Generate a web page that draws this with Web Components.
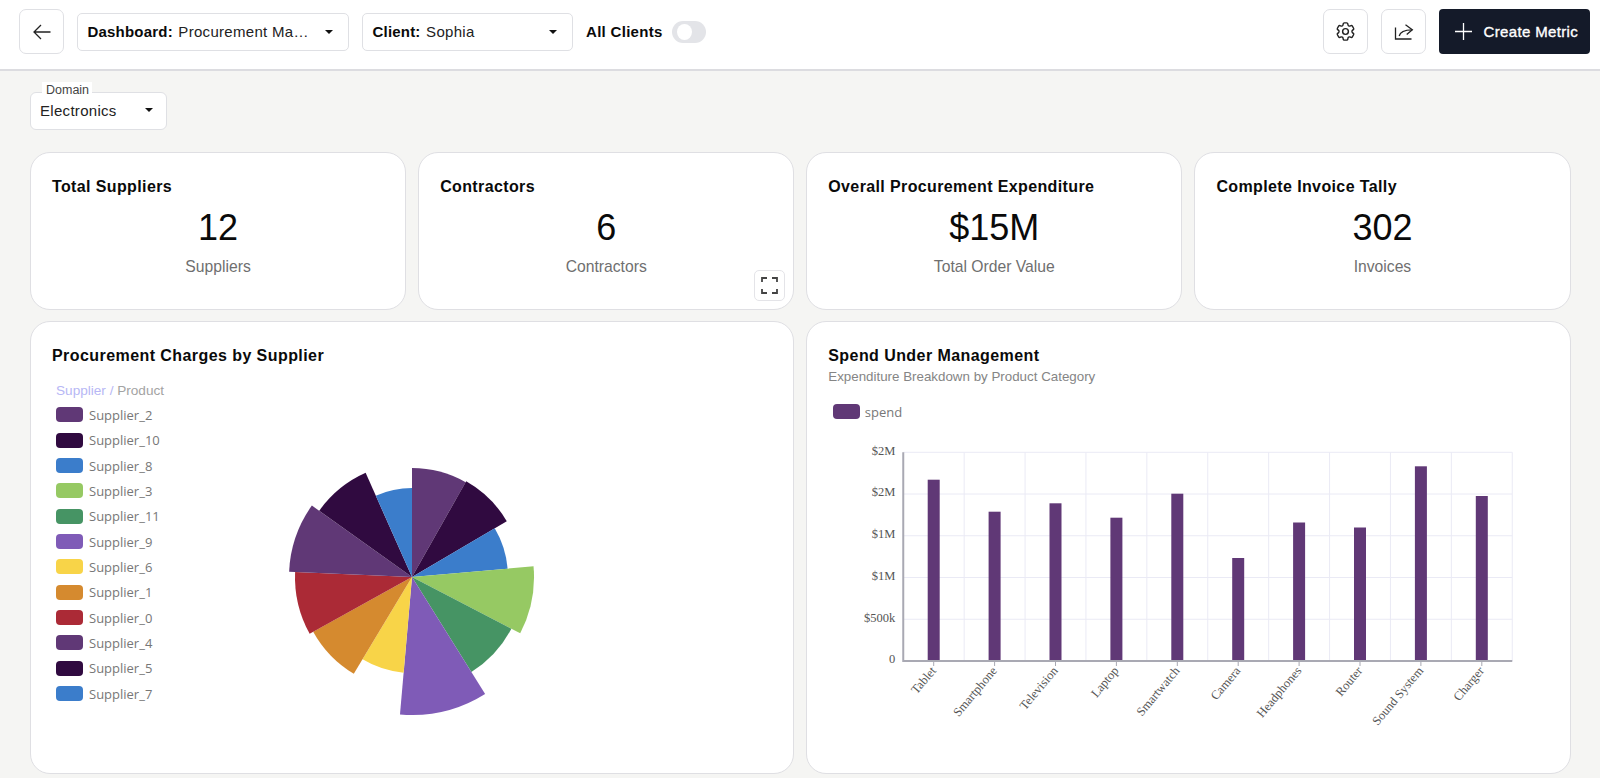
<!DOCTYPE html>
<html>

<head>
    <meta charset="utf-8">
    <title>Procurement Dashboard</title>
    <style>
        html, body { margin: 0; padding: 0; background: #f5f5f3; }
        body { font-family: "Liberation Sans", Arial, sans-serif; color: #0a0a0a; height: 778px; overflow: hidden; }
    </style>
</head>

<body>
    <app-header>
        <icon-button slot="left" icon="back"></icon-button>
        <top-select slot="left" label="Dashboard:" value="Procurement Ma…" width="272"></top-select>
        <top-select slot="left" label="Client:" value="Sophia" width="211" class="client"></top-select>
        <all-clients slot="left"></all-clients>
        <icon-button slot="right" icon="gear"></icon-button>
        <icon-button slot="right" icon="share"></icon-button>
        <create-button slot="right">Create Metric</create-button>
    </app-header>

    <dash-page>
        <domain-select label="Domain" value="Electronics"></domain-select>
        <stat-grid>
            <stat-card title="Total Suppliers" value="12" unit="Suppliers"></stat-card>
            <stat-card title="Contractors" value="6" unit="Contractors" expand></stat-card>
            <stat-card title="Overall Procurement Expenditure" value="$15M" unit="Total Order Value"></stat-card>
            <stat-card title="Complete Invoice Tally" value="302" unit="Invoices"></stat-card>
        </stat-grid>
        <chart-grid>
            <chart-card title="Procurement Charges by Supplier">
                <rose-chart></rose-chart>
            </chart-card>
            <chart-card title="Spend Under Management" subtitle="Expenditure Breakdown by Product Category">
                <bar-chart></bar-chart>
            </chart-card>
        </chart-grid>
    </dash-page>

    <script>
        const ICONS = {
            back: '<svg width="20" height="20" viewBox="0 0 20 20" fill="none" stroke="#222" stroke-width="1.3"><path d="M18.5 10H2M9 3l-7 7 7 7"/></svg>',
            gear: '<svg width="23" height="23" viewBox="0 0 24 24" fill="none" stroke="#222" stroke-width="1.5" stroke-linecap="round" stroke-linejoin="round"><path d="M9.594 3.94c.09-.542.56-.94 1.11-.94h2.593c.55 0 1.02.398 1.11.94l.213 1.281c.063.374.313.686.645.87.074.04.147.083.22.127.325.196.72.257 1.075.124l1.217-.456a1.125 1.125 0 0 1 1.37.49l1.296 2.247a1.125 1.125 0 0 1-.26 1.431l-1.003.827c-.293.241-.438.613-.43.992a7.723 7.723 0 0 1 0 .255c-.008.378.137.75.43.991l1.004.827c.424.35.534.955.26 1.43l-1.298 2.247a1.125 1.125 0 0 1-1.369.491l-1.217-.456c-.355-.133-.75-.072-1.076.124a6.47 6.47 0 0 1-.22.128c-.331.183-.581.495-.644.869l-.213 1.281c-.09.543-.56.94-1.11.94h-2.594c-.55 0-1.019-.398-1.11-.94l-.213-1.281c-.062-.374-.312-.686-.644-.87a6.52 6.52 0 0 1-.22-.127c-.325-.196-.72-.257-1.076-.124l-1.217.456a1.125 1.125 0 0 1-1.369-.49l-1.297-2.247a1.125 1.125 0 0 1 .26-1.431l1.004-.827c.292-.24.437-.613.43-.991a6.932 6.932 0 0 1 0-.255c.007-.38-.138-.751-.43-.992l-1.004-.827a1.125 1.125 0 0 1-.26-1.43l1.297-2.247a1.125 1.125 0 0 1 1.37-.491l1.216.456c.356.133.751.072 1.076-.124.072-.044.146-.086.22-.128.332-.183.582-.495.644-.869l.214-1.28Z"/><path d="M15 12a3 3 0 1 1-6 0 3 3 0 0 1 6 0Z"/></svg>',
            share: '<svg width="20" height="20" viewBox="0 1 20 20" fill="none" stroke="#222" stroke-width="1.3"><path d="M1.5 6.5V18H17.5"/><path d="M5.2 15C6 11 9.5 8.8 18.2 8.8"/><path d="M11.5 3.8l6.8 5-5.6 4.6"/></svg>'
        };

        class AppHeader extends HTMLElement {
            constructor() {
                super();
                this.attachShadow({ mode: 'open' });
                this.shadowRoot.innerHTML = `
                <style>
                    :host { display: flex; justify-content: space-between; align-items: center; box-sizing: border-box;
                        height: 70.5px; padding: 0 10px 5.5px 19px; background: #fff; border-bottom: 2px solid #dcdce0; }
                    .side { display: flex; align-items: center; }
                    .left { gap: 13px; }
                    .right { gap: 13px; }
                </style>
                <div class="side left"><slot name="left"></slot></div>
                <div class="side right"><slot name="right"></slot></div>
                `;
            }
        }
        customElements.define('app-header', AppHeader);

        class IconButton extends HTMLElement {
            constructor() {
                super();
                this.attachShadow({ mode: 'open' });
                this.shadowRoot.innerHTML = `
                <style>
                    :host { display: flex; align-items: center; justify-content: center; box-sizing: border-box;
                        width: 45px; height: 45px; background: #fff; border: 1px solid #dfe0e4; border-radius: 7px; }
                    svg { display: block; }
                </style>
                ${ICONS[this.getAttribute('icon')]}
                `;
            }
        }
        customElements.define('icon-button', IconButton);

        class TopSelect extends HTMLElement {
            constructor() {
                super();
                this.attachShadow({ mode: 'open' });
                this.shadowRoot.innerHTML = `
                <style>
                    :host { display: flex; align-items: center; box-sizing: border-box; height: 38px; padding: 0 12px 0 9.5px;
                        width: ${this.getAttribute('width')}px; background: #fff; border: 1px solid #dfe0e4; border-radius: 5px;
                        font-size: 15px; letter-spacing: .3px; color: #222; }
                    b { color: #0a0a0a; margin-right: 5.5px; letter-spacing: .2px; }
                    span { flex: 1; white-space: nowrap; }
                    i { width: 0; height: 0; border: 4px solid transparent; border-top: 4px solid #111; border-bottom: 0; margin-right: 3px; }
                </style>
                <b>${this.getAttribute('label')}</b><span>${this.getAttribute('value')}</span><i></i>
                `;
            }
        }
        customElements.define('top-select', TopSelect);

        class AllClients extends HTMLElement {
            constructor() {
                super();
                this.attachShadow({ mode: 'open' });
                this.shadowRoot.innerHTML = `
                <style>
                    :host { display: flex; align-items: center; gap: 9px; font-size: 15px; font-weight: bold; letter-spacing: .3px; }
                    .track { display: flex; align-items: center; box-sizing: border-box; width: 34.5px; height: 22px; padding: 3px 5px;
                        border-radius: 11px; background: #e3e4e8; }
                    .thumb { width: 15px; height: 16px; border-radius: 50%; background: #fff; }
                </style>
                <span>All Clients</span><div class="track"><div class="thumb"></div></div>
                `;
            }
        }
        customElements.define('all-clients', AllClients);

        class CreateButton extends HTMLElement {
            constructor() {
                super();
                this.attachShadow({ mode: 'open' });
                this.shadowRoot.innerHTML = `
                <style>
                    :host { display: flex; align-items: center; gap: 11.5px; box-sizing: border-box; width: 151px; height: 45px; padding-left: 16px;
                        background: #141a29; border-radius: 4px; color: #fff; font-size: 15px; letter-spacing: .35px;
                        -webkit-text-stroke: .35px #fff; white-space: nowrap; }
                    svg { display: block; flex: none; }
                </style>
                <svg width="17" height="17" viewBox="0 0 17 17" stroke="#fff" stroke-width="1.3"><path d="M0 8.5h17M8.5 0v17"/></svg>
                <slot></slot>
                `;
            }
        }
        customElements.define('create-button', CreateButton);

        class DashPage extends HTMLElement {
            constructor() {
                super();
                this.attachShadow({ mode: 'open' });
                this.shadowRoot.innerHTML = `
                <style>
                    :host { display: flex; flex-direction: column; padding: 21.5px 29.5px 0 30px; }
                </style>
                <slot></slot>
                `;
            }
        }
        customElements.define('dash-page', DashPage);

        class DomainSelect extends HTMLElement {
            constructor() {
                super();
                this.attachShadow({ mode: 'open' });
                this.shadowRoot.innerHTML = `
                <style>
                    :host { position: relative; display: flex; align-items: center; justify-content: space-between; box-sizing: border-box;
                        width: 137px; height: 38px; padding: 0 13px 2px 9px; background: #fff; border: 1px solid #dfe0e4; border-radius: 6px;
                        font-size: 15px; letter-spacing: .3px; color: #222; margin-bottom: 22px; }
                    label { position: absolute; left: 11px; top: -11px; height: 11px; padding: 0 3px 0 4px; background: #fff;
                        font-size: 12.5px; line-height: 17px; letter-spacing: 0; color: #444; }
                    i { width: 0; height: 0; border: 4px solid transparent; border-top: 4px solid #111; border-bottom: 0; }
                </style>
                <label>${this.getAttribute('label')}</label><span>${this.getAttribute('value')}</span><i></i>
                `;
            }
        }
        customElements.define('domain-select', DomainSelect);

        class StatGrid extends HTMLElement {
            constructor() {
                super();
                this.attachShadow({ mode: 'open' });
                this.shadowRoot.innerHTML = `
                <style>
                    :host { display: grid; grid-template-columns: repeat(4, 1fr); gap: 12px; margin-bottom: 11px; }
                </style>
                <slot></slot>
                `;
            }
        }
        customElements.define('stat-grid', StatGrid);

        class StatCard extends HTMLElement {
            constructor() {
                super();
                this.attachShadow({ mode: 'open' });
                const expand = this.hasAttribute('expand') ? `
                <div class="expand">
                    <svg width="17" height="17" viewBox="0 0 17 17" fill="none" stroke="#444" stroke-width="1.8"><path d="M1 5V1h5M11 1h5v4M16 12v4h-5M6 16H1v-4"/></svg>
                </div>` : '';
                this.shadowRoot.innerHTML = `
                <style>
                    :host { position: relative; display: flex; flex-direction: column; box-sizing: border-box; height: 158px; padding: 24px 21px 0;
                        background: #fff; border: 1px solid #dfdfe3; border-radius: 20px; }
                    h3 { margin: 0; font-size: 16px; line-height: 20px; font-weight: bold; letter-spacing: .38px; color: #0a0a0a; }
                    .value { margin-top: 9px; text-align: center; font-size: 36px; line-height: 44px; color: #0a0a0a; }
                    .unit { margin-top: 7px; text-align: center; font-size: 15.7px; line-height: 20px; color: #6f6f6f; }
                    .expand { position: absolute; right: 8px; bottom: 8px; display: flex; align-items: center; justify-content: center;
                        box-sizing: border-box; width: 31px; height: 31px; background: #fff; border: 1px solid #e4e4e8; border-radius: 5px; }
                </style>
                <h3>${this.getAttribute('title')}</h3>
                <div class="value">${this.getAttribute('value')}</div>
                <div class="unit">${this.getAttribute('unit')}</div>
                ${expand}
                `;
            }
        }
        customElements.define('stat-card', StatCard);

        class ChartGrid extends HTMLElement {
            constructor() {
                super();
                this.attachShadow({ mode: 'open' });
                this.shadowRoot.innerHTML = `
                <style>
                    :host { display: grid; grid-template-columns: 1fr 1fr; gap: 12px; }
                </style>
                <slot></slot>
                `;
            }
        }
        customElements.define('chart-grid', ChartGrid);

        class ChartCard extends HTMLElement {
            constructor() {
                super();
                this.attachShadow({ mode: 'open' });
                const sub = this.getAttribute('subtitle');
                this.shadowRoot.innerHTML = `
                <style>
                    :host { display: flex; flex-direction: column; box-sizing: border-box; height: 452.5px; padding: 24px 21px 0;
                        background: #fff; border: 1px solid #dfdfe3; border-radius: 20px; overflow: hidden; }
                    h3 { margin: 0; font-size: 16px; line-height: 20px; font-weight: bold; letter-spacing: .43px; color: #0a0a0a; }
                    p { margin: 2px 0 0; font-size: 13.35px; line-height: 18px; color: #858585; }
                </style>
                <h3>${this.getAttribute('title')}</h3>
                ${sub ? `<p>${sub}</p>` : ''}
                <slot></slot>
                `;
            }
        }
        customElements.define('chart-card', ChartCard);

        class LegendItem extends HTMLElement {
            constructor() {
                super();
                this.attachShadow({ mode: 'open' });
                this.shadowRoot.innerHTML = `
                <style>
                    :host { display: flex; align-items: center; gap: 6px; height: 15px; font-family: "Open Sans", sans-serif; font-size: 13px; color: #777; }
                    i { width: 27px; height: 15px; border-radius: 4px; background: ${this.getAttribute('color')}; }
                </style>
                <i></i><slot></slot>
                `;
            }
        }
        customElements.define('legend-item', LegendItem);

        // name, colour, start angle, outer radius (clockwise from 12 o'clock)
        const SUPPLIERS = [
            ['Supplier_2', '#603876', 0, 109],
            ['Supplier_10', '#300a40', 29.5, 110],
            ['Supplier_8', '#3b7dcb', 59.5, 96],
            ['Supplier_3', '#96c963', 85, 122],
            ['Supplier_11', '#469464', 117.5, 112],
            ['Supplier_9', '#7f5bb7', 148, 138],
            ['Supplier_6', '#f8d448', 185, 96],
            ['Supplier_1', '#d58a2f', 211, 113],
            ['Supplier_0', '#ab2a36', 241, 117],
            ['Supplier_4', '#603876', 272.5, 123],
            ['Supplier_5', '#300a40', 305.5, 114],
            ['Supplier_7', '#3b7dcb', 336, 89]
        ];

        class RoseChart extends HTMLElement {
            constructor() {
                super();
                this.attachShadow({ mode: 'open' });
                const cx = 150, cy = 150;
                const point = (r, a) => {
                    const t = a * Math.PI / 180;
                    return (cx + r * Math.sin(t)).toFixed(2) + ' ' + (cy - r * Math.cos(t)).toFixed(2);
                };
                const slices = SUPPLIERS.map((s, i) => {
                    const end = i + 1 < SUPPLIERS.length ? SUPPLIERS[i + 1][2] : 360;
                    return `<path fill="${s[1]}" d="M${cx} ${cy}L${point(s[3], s[2])}A${s[3]} ${s[3]} 0 0 1 ${point(s[3], end)}Z"/>`;
                }).join('');
                const legend = SUPPLIERS.map(s => `<legend-item color="${s[1]}">${s[0]}</legend-item>`).join('');
                this.shadowRoot.innerHTML = `
                <style>
                    :host { display: flex; align-items: flex-start; margin-top: 16px; }
                    .list { display: flex; flex-direction: column; flex: none; gap: 10.35px; width: 210px; padding-left: 4px; box-sizing: border-box; }
                    .crumb { font-size: 13.6px; line-height: 18px; margin-bottom: -3px; color: #a3a3a3; }
                    .crumb span { color: #b7b7f5; }
                    svg { display: block; flex: none; margin-top: 45px; }
                </style>
                <div class="list">
                    <div class="crumb"><span>Supplier /</span> Product</div>
                    ${legend}
                </div>
                <svg width="300" height="300" viewBox="0 0 300 300">${slices}</svg>
                `;
            }
        }
        customElements.define('rose-chart', RoseChart);

        const SPEND = [
            ['Tablet', 479.7], ['Smartphone', 511.7], ['Television', 503.3], ['Laptop', 517.7], ['Smartwatch', 493.7],
            ['Camera', 558], ['Headphones', 522.5], ['Router', 527.5], ['Sound System', 466.3], ['Charger', 496]
        ];

        class BarChart extends HTMLElement {
            constructor() {
                super();
                this.attachShadow({ mode: 'open' });
                // page position of the svg's corner, the numbers below are page pixels
                const ox = 828.75, oy = 440;
                const left = 904 - ox, right = 1513 - ox, top = 452.3 - oy, base = 661 - oy;
                const step = (right - left) / 10, rowH = (base - top) / 5;
                const ticks = ['$2M', '$2M', '$1M', '$1M', '$500k', '0'];
                let grid = '', labels = '', bars = '', axisTicks = '';
                ticks.forEach((t, i) => {
                    const y = top + rowH * i;
                    if (i < 5) grid += `<line x1="${left}" x2="${right}" y1="${y}" y2="${y}"/>`;
                    labels += `<text x="${left - 8}" y="${y - 0.5}" text-anchor="end" dominant-baseline="middle">${t}</text>`;
                });
                for (let i = 1; i <= 10; i++) grid += `<line x1="${left + step * i}" x2="${left + step * i}" y1="${top}" y2="${base}"/>`;
                SPEND.forEach((s, i) => {
                    const x = left + step * (i + .5);
                    const y = s[1] - oy;
                    bars += `<rect x="${x - 6}" y="${y}" width="12" height="${base - y}" fill="#603876"/>`;
                    axisTicks += `<line x1="${x}" x2="${x}" y1="${base}" y2="${base + 5}"/>`;
                    labels += `<text x="${x + 3}" y="${base + 10}" text-anchor="end" transform="rotate(-50 ${x + 3} ${base + 10})">${s[0]}</text>`;
                });
                this.shadowRoot.innerHTML = `
                <style>
                    :host { display: block; margin-top: 18px; }
                    legend-item { margin-left: 4.5px; gap: 5px; }
                    svg { display: block; margin-top: 21px; overflow: visible; }
                    text { font-family: "Liberation Serif", serif; font-size: 12.5px; fill: #555; }
                    .grid line { stroke: #eaeaf5; stroke-width: 1; }
                    .axis line, .axis path { stroke: #a9a9b3; stroke-width: 2; fill: none; }
                    .ticks line { stroke: #a9a9b3; stroke-width: 1; }
                </style>
                <legend-item color="#603876">spend</legend-item>
                <svg width="718" height="330" viewBox="0 0 718 330">
                    <g class="grid">${grid}</g>
                    ${bars}
                    <g class="axis"><path d="M${left} ${top}V${base}H${right}"/></g>
                    <g class="ticks">${axisTicks}</g>
                    ${labels}
                </svg>
                `;
            }
        }
        customElements.define('bar-chart', BarChart);
    </script>
</body>

</html>
